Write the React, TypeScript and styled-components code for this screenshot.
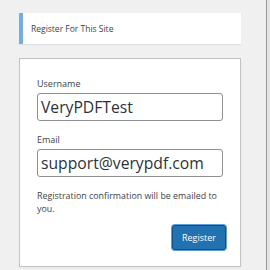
import { createGlobalStyle, styled } from "styled-components";

const GlobalStyle = createGlobalStyle`
  html, body {
    margin: 0;
    padding: 0;
    background: #f0f0f1;
  }
  body {
    font-family: "Open Sans", "Noto Sans", sans-serif;
    color: #3c434a;
  }
`;

const Page = styled.div`
  display: flex;
  width: 270px;
  height: 270px;
  overflow: hidden;
`;

const Main = styled.div`
  width: 266px;
  padding: 13px 0 0 19px;
  box-sizing: border-box;
`;

const Edge = styled.div`
  width: 3px;
  border-left: 1px solid #9a9a9a;
  background: #e4e4e4;
`;

const Message = styled.div`
  width: 222px;
  height: 31px;
  box-sizing: border-box;
  background: #fff;
  border-left: 4px solid #72aee6;
  box-shadow: 0 1px 1px rgba(0, 0, 0, 0.06);
  padding-left: 8px;
  display: flex;
  align-items: center;
  font-size: 8.5px;
  color: #3c434a;
`;

const Form = styled.form`
  margin-top: 14px;
  width: 222px;
  box-sizing: border-box;
  background: #fff;
  border: 1px solid #c3c4c7;
  box-shadow: 0 1px 3px rgba(0, 0, 0, 0.04);
  padding: 18px 17px 16px 17px;
  display: flex;
  flex-direction: column;
`;

const Label = styled.label`
  font-size: 9px;
  line-height: 14px;
  color: #3c434a;
  margin-bottom: 2px;
`;

const Input = styled.input`
  width: 186px;
  height: 28px;
  box-sizing: border-box;
  border: 1px solid #8c8f94;
  border-radius: 3px;
  padding: 0 3px;
  font-family: "Open Sans", "Noto Sans", sans-serif;
  font-size: 15.7px;
  color: #2c3338;
  background: #fff;
  outline: none;
  margin-bottom: 12px;
`;

const Note = styled.p`
  margin: 0;
  font-size: 8.9px;
  line-height: 13px;
  color: #3c434a;
`;

const Actions = styled.div`
  display: flex;
  justify-content: flex-end;
  margin-top: 10px;
`;

const Button = styled.button`
  width: 54px;
  height: 25px;
  margin-right: -3px;
  box-sizing: border-box;
  background: #2271b1;
  border: 1px solid #0f4f85;
  border-radius: 3px;
  box-shadow: 0 0 0 1px #5d9fd6;
  color: #fff;
  font-family: "Open Sans", "Noto Sans", sans-serif;
  font-size: 9px;
  padding: 0;
`;

export default function App() {
  return (
    <Page>
      <GlobalStyle />
      <Main>
        <Message>Register For This Site</Message>
        <Form onSubmit={(e) => e.preventDefault()}>
          <Label htmlFor="user_login">Username</Label>
          <Input id="user_login" type="text" defaultValue="VeryPDFTest" />
          <Label htmlFor="user_email">Email</Label>
          <Input id="user_email" type="email" defaultValue="support@verypdf.com" />
          <Note>Registration confirmation will be emailed to you.</Note>
          <Actions>
            <Button type="submit">Register</Button>
          </Actions>
        </Form>
      </Main>
      <Edge />
    </Page>
  );
}
